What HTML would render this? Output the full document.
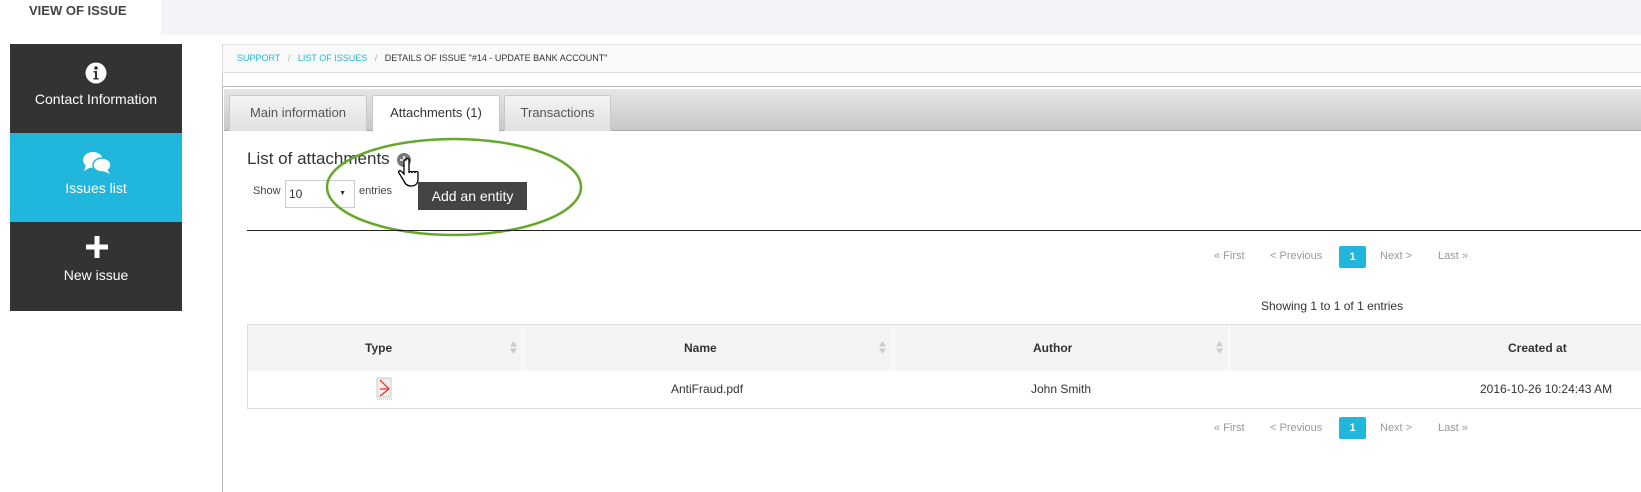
<!DOCTYPE html>
<html style="overflow:hidden;height:492px"><head><meta charset="utf-8"><style>
*{margin:0;padding:0;box-sizing:border-box}
body{width:1641px;height:492px;overflow:hidden;background:#fff;font-family:"Liberation Sans",sans-serif;position:relative;color:#333}
.a{position:absolute}
.side{left:10px;width:172px;height:89px;color:#fff;text-align:center;font-size:14px}
.tab{top:95px;height:36px;border:1px solid #c8c8c8;border-bottom:none;border-radius:3px 3px 0 0;background:linear-gradient(#f4f4f4,#e0e0e0);font-size:13px;color:#555;text-align:center;line-height:34px}
.pg{font-size:11px;color:#999;top:250px}
</style></head><body>
<div class="a" style="left:161px;top:0;width:1480px;height:35px;background:#f3f4f8"></div>
<div class="a" style="left:29px;top:3px;font-size:13px;font-weight:bold;color:#444">VIEW OF ISSUE</div>

<div class="a side" style="top:44px;background:#333">
<svg class="a" style="left:75px;top:18px" width="22" height="22" viewBox="0 0 22 22"><circle cx="11" cy="11" r="10.5" fill="#fff"/><circle cx="11" cy="6" r="1.8" fill="#333"/><path d="M8.5 9h3.5v7h1.5v1.5h-5V16h1.5v-5.5h-1.5z" fill="#333"/></svg>
<div class="a" style="left:0;width:172px;top:47px">Contact Information</div></div>
<div class="a side" style="top:133px;background:#21b7dd">
<svg class="a" style="left:71px;top:17px" width="32" height="26" viewBox="0 0 32 26"><ellipse cx="12" cy="10" rx="10" ry="8" fill="#fff"/><path d="M5 15 L3 21 L10 17z" fill="#fff"/><ellipse cx="21" cy="15" rx="9" ry="7" fill="#fff" stroke="#21b7dd" stroke-width="1.5"/><path d="M26 19 L29 24 L22 21z" fill="#fff"/></svg>
<div class="a" style="left:0;width:172px;top:47px">Issues list</div></div>
<div class="a side" style="top:222px;background:#333">
<svg class="a" style="left:75px;top:13px" width="24" height="24" viewBox="0 0 24 24"><path d="M9.5 1h5v8.5H23v5h-8.5V23h-5v-8.5H1v-5h8.5z" fill="#fff"/></svg>
<div class="a" style="left:0;width:172px;top:45px">New issue</div></div>

<div class="a" style="left:222px;top:44px;width:1px;height:448px;background:#ccc"></div>
<div class="a" style="left:222px;top:44px;width:1419px;height:29px;background:#fafafa;border:1px solid #e0e0e0;border-right:none;border-radius:3px 0 0 3px;font-size:9px;line-height:27px;padding-left:14px;color:#333">
<span style="color:#21b7dd">SUPPORT</span>&nbsp;&nbsp;&nbsp;<span style="color:#aaa">/</span>&nbsp;&nbsp;&nbsp;<span style="color:#21b7dd">LIST OF ISSUES</span>&nbsp;&nbsp;&nbsp;<span style="color:#aaa">/</span>&nbsp;&nbsp;&nbsp;DETAILS OF ISSUE "#14 - UPDATE BANK ACCOUNT"</div>

<div class="a" style="left:222px;top:86px;width:1419px;height:406px;border:1px solid #bbb;border-right:none;border-bottom:none;border-radius:3px 0 0 0"></div>
<div class="a" style="left:224px;top:89px;width:1417px;height:42px;background:linear-gradient(#e6e6e6,#c8c8c8);border-bottom:1px solid #aaa"></div>
<div class="a tab" style="left:229px;width:138px">Main information</div>
<div class="a tab" style="left:372px;width:128px;background:#fff;color:#333;height:37px">Attachments (1)</div>
<div class="a tab" style="left:504px;width:107px">Transactions</div>

<div class="a" style="left:247px;top:149px;font-size:17px;color:#333">List of attachments</div>
<svg class="a" style="left:396px;top:152px" width="16" height="16"><circle cx="8" cy="8" r="7" fill="#777"/><path d="M4 8h8M8 4v8" stroke="#ddd" stroke-width="2"/></svg>
<svg class="a" style="left:398px;top:158px" width="22" height="30" viewBox="0 0 22 30"><path d="M6 2 v14 l-3 -3 c-2 -1 -3 1 -2 2 l5 8 c1 3 3 5 7 5 c4 0 7 -2 7 -7 v-6 c0 -2 -3 -2 -3 0 c0 -2 -3 -2 -3 0 c0 -2 -3 -2 -3 0 v-13 c0 -2 -3 -2 -3 0z" fill="#fff" stroke="#000" stroke-width="1.3"/></svg>
<div class="a" style="left:253px;top:185px;font-size:11px;color:#444">Show</div>
<div class="a" style="left:285px;top:180px;width:70px;height:28px;border:1px solid #ccc;font-size:12px;line-height:26px;padding-left:3px">10<span style="position:absolute;right:8px;top:0;font-size:7px">▼</span></div>
<div class="a" style="left:359px;top:185px;font-size:11px;color:#444">entries</div>
<div class="a" style="left:418px;top:182px;width:109px;height:28px;background:#444;color:#fff;font-size:14px;line-height:28px;text-align:center">Add an entity</div>
<svg class="a" style="left:320px;top:132px" width="270" height="110"><ellipse cx="134" cy="55" rx="127" ry="48" fill="none" stroke="#66a82a" stroke-width="2.5"/></svg>

<div class="a" style="left:247px;top:230px;width:1394px;height:1px;background:#222"></div>

<div class="a pg" style="left:1214px">« First</div>
<div class="a pg" style="left:1270px">&lt; Previous</div>
<div class="a" style="left:1339px;top:246px;width:27px;height:22px;background:#21b7dd;border-radius:2px;color:#fff;font-size:11px;font-weight:bold;text-align:center;line-height:22px">1</div>
<div class="a pg" style="left:1380px">Next &gt;</div>
<div class="a pg" style="left:1438px">Last »</div>

<div class="a" style="left:1261px;top:299px;font-size:12px;color:#333">Showing 1 to 1 of 1 entries</div>

<div class="a" style="left:247px;top:324px;width:1394px;height:85px;border:1px solid #ddd;border-right:none"></div>
<div class="a" style="left:248px;top:325px;width:275px;height:46px;background:#f4f4f4"></div>
<div class="a" style="left:524px;top:325px;width:368px;height:46px;background:#f4f4f4"></div>
<div class="a" style="left:893px;top:325px;width:336px;height:46px;background:#f4f4f4"></div>
<div class="a" style="left:1230px;top:325px;width:411px;height:46px;background:#f4f4f4"></div>
<div class="a" style="left:365px;top:341px;font-size:12px;font-weight:bold">Type</div>
<div class="a" style="left:684px;top:341px;font-size:12px;font-weight:bold">Name</div>
<div class="a" style="left:1033px;top:341px;font-size:12px;font-weight:bold">Author</div>
<div class="a" style="left:1508px;top:341px;font-size:12px;font-weight:bold">Created at</div>
<svg class="a" style="left:510px;top:341px" width="7" height="13"><path d="M0 5.5L3.5 0L7 5.5zM0 7.5L3.5 13L7 7.5z" fill="#ccc"/></svg>
<svg class="a" style="left:879px;top:341px" width="7" height="13"><path d="M0 5.5L3.5 0L7 5.5zM0 7.5L3.5 13L7 7.5z" fill="#ccc"/></svg>
<svg class="a" style="left:1216px;top:341px" width="7" height="13"><path d="M0 5.5L3.5 0L7 5.5zM0 7.5L3.5 13L7 7.5z" fill="#ccc"/></svg>
<svg class="a" style="left:376px;top:377px" width="18" height="23" viewBox="0 0 18 23"><rect x="1" y="1" width="14" height="19" fill="#eee" stroke="#ccc"/><path d="M4 3 L13 12 L4 19 M4 12 L13 12" stroke="#e33" stroke-width="1.3" fill="none"/><path d="M1 22h15" stroke="#aaa" stroke-dasharray="1 1"/></svg>
<div class="a" style="left:671px;top:382px;font-size:12px">AntiFraud.pdf</div>
<div class="a" style="left:1031px;top:382px;font-size:12px">John Smith</div>
<div class="a" style="left:1480px;top:382px;font-size:12px">2016-10-26 10:24:43 AM</div>

<div class="a pg" style="left:1214px;top:422px">« First</div>
<div class="a pg" style="left:1270px;top:422px">&lt; Previous</div>
<div class="a" style="left:1339px;top:417px;width:27px;height:22px;background:#21b7dd;border-radius:2px;color:#fff;font-size:11px;font-weight:bold;text-align:center;line-height:22px">1</div>
<div class="a pg" style="left:1380px;top:422px">Next &gt;</div>
<div class="a pg" style="left:1438px;top:422px">Last »</div>
</body></html>
